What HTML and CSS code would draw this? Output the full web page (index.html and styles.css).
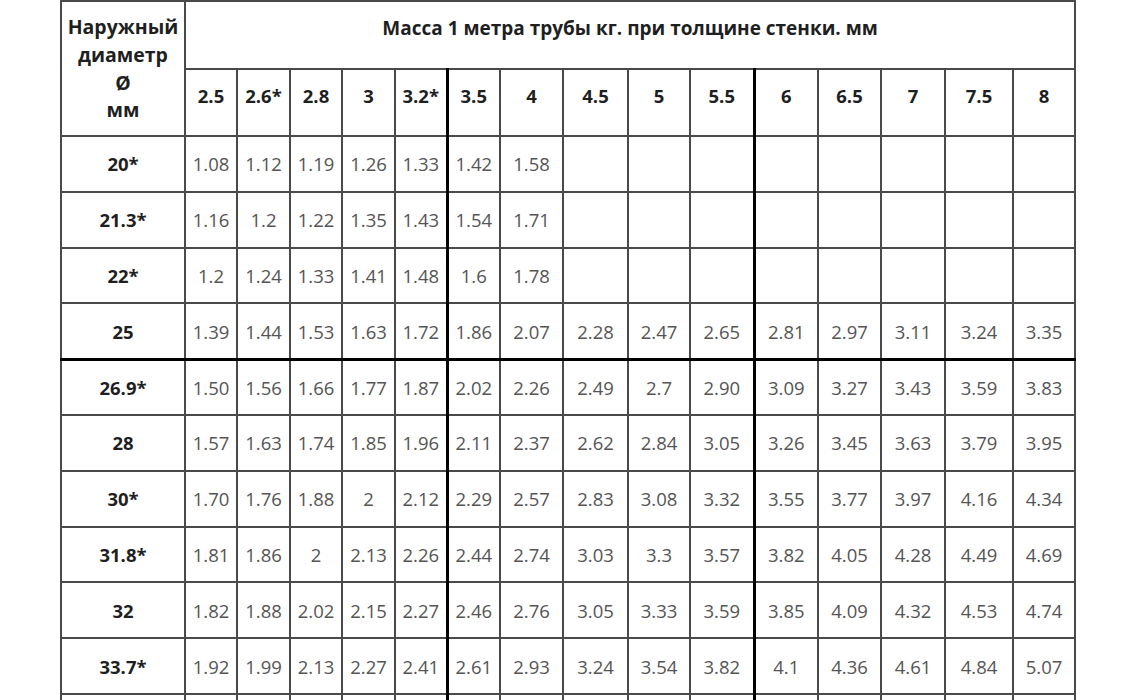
FILE: index.html
```html
<!DOCTYPE html>
<html lang="ru">
<head>
<meta charset="utf-8">
<link rel="stylesheet" href="styles.css">
</head>
<body>
<table class="grid">
<colgroup>
<col class="c-d"><col class="c52"><col class="c53"><col class="c52"><col class="c53"><col class="c52"><col class="c53"><col class="c63"><col class="c65"><col class="c62"><col class="c64"><col class="c64"><col class="c63"><col class="c64"><col class="c68"><col class="c62">
</colgroup>
<thead>
<tr class="h1">
<th rowspan="2" class="dia">Наружный<br>диаметр<br>Ø<br>мм</th>
<th colspan="15" class="title">Масса 1 метра трубы кг. при толщине стенки. мм</th>
</tr>
<tr class="h2">
<th>2.5</th><th>2.6*</th><th>2.8</th><th>3</th><th>3.2*</th><th>3.5</th><th>4</th><th>4.5</th><th>5</th><th>5.5</th><th>6</th><th>6.5</th><th>7</th><th>7.5</th><th>8</th>
</tr>
</thead>
<tbody>
<tr><th>20*</th><td>1.08</td><td>1.12</td><td>1.19</td><td>1.26</td><td>1.33</td><td>1.42</td><td>1.58</td><td></td><td></td><td></td><td></td><td></td><td></td><td></td><td></td></tr>
<tr><th>21.3*</th><td>1.16</td><td>1.2</td><td>1.22</td><td>1.35</td><td>1.43</td><td>1.54</td><td>1.71</td><td></td><td></td><td></td><td></td><td></td><td></td><td></td><td></td></tr>
<tr><th>22*</th><td>1.2</td><td>1.24</td><td>1.33</td><td>1.41</td><td>1.48</td><td>1.6</td><td>1.78</td><td></td><td></td><td></td><td></td><td></td><td></td><td></td><td></td></tr>
<tr><th>25</th><td>1.39</td><td>1.44</td><td>1.53</td><td>1.63</td><td>1.72</td><td>1.86</td><td>2.07</td><td>2.28</td><td>2.47</td><td>2.65</td><td>2.81</td><td>2.97</td><td>3.11</td><td>3.24</td><td>3.35</td></tr>
<tr class="sep"><th>26.9*</th><td>1.50</td><td>1.56</td><td>1.66</td><td>1.77</td><td>1.87</td><td>2.02</td><td>2.26</td><td>2.49</td><td>2.7</td><td>2.90</td><td>3.09</td><td>3.27</td><td>3.43</td><td>3.59</td><td>3.83</td></tr>
<tr><th>28</th><td>1.57</td><td>1.63</td><td>1.74</td><td>1.85</td><td>1.96</td><td>2.11</td><td>2.37</td><td>2.62</td><td>2.84</td><td>3.05</td><td>3.26</td><td>3.45</td><td>3.63</td><td>3.79</td><td>3.95</td></tr>
<tr><th>30*</th><td>1.70</td><td>1.76</td><td>1.88</td><td>2</td><td>2.12</td><td>2.29</td><td>2.57</td><td>2.83</td><td>3.08</td><td>3.32</td><td>3.55</td><td>3.77</td><td>3.97</td><td>4.16</td><td>4.34</td></tr>
<tr><th>31.8*</th><td>1.81</td><td>1.86</td><td>2</td><td>2.13</td><td>2.26</td><td>2.44</td><td>2.74</td><td>3.03</td><td>3.3</td><td>3.57</td><td>3.82</td><td>4.05</td><td>4.28</td><td>4.49</td><td>4.69</td></tr>
<tr><th>32</th><td>1.82</td><td>1.88</td><td>2.02</td><td>2.15</td><td>2.27</td><td>2.46</td><td>2.76</td><td>3.05</td><td>3.33</td><td>3.59</td><td>3.85</td><td>4.09</td><td>4.32</td><td>4.53</td><td>4.74</td></tr>
<tr><th>33.7*</th><td>1.92</td><td>1.99</td><td>2.13</td><td>2.27</td><td>2.41</td><td>2.61</td><td>2.93</td><td>3.24</td><td>3.54</td><td>3.82</td><td>4.1</td><td>4.36</td><td>4.61</td><td>4.84</td><td>5.07</td></tr>
<tr class="tail"><th></th><td></td><td></td><td></td><td></td><td></td><td></td><td></td><td></td><td></td><td></td><td></td><td></td><td></td><td></td><td></td></tr>
</tbody>
</table>
</body>
</html>
```

FILE: styles.css
```css
html, body {
  margin: 0;
  padding: 0;
  background: #ffffff;
}

body {
  padding-left: 60px;
  font-family: "Open Sans", "Noto Sans", "DejaVu Sans", sans-serif;
  overflow: hidden;
}

.grid {
  border-collapse: collapse;
  table-layout: fixed;
  width: 1016px;
  font-size: 18.5px;
}

.c-d { width: 124px; }
.c52 { width: 52px; }
.c53 { width: 53px; }
.c62 { width: 62px; }
.c63 { width: 63px; }
.c64 { width: 64px; }
.c65 { width: 65px; }
.c68 { width: 68px; }

.grid th,
.grid td {
  border: 2px solid #4a4a4a;
  padding: 0;
  text-align: center;
  vertical-align: middle;
  white-space: nowrap;
}

.grid th {
  font-weight: 700;
  color: #1f1f1f;
}

.grid td {
  font-weight: 400;
  color: #555555;
}

.grid .h1 { height: 68px; }
.grid .h2 { height: 67px; }
.grid tbody tr { height: 55.8px; }

.grid .dia {
  font-size: 19.5px;
  line-height: 27.7px;
}

.grid .title {
  font-size: 19px;
  vertical-align: top;
  padding-top: 13px;
}

.grid .h2 th {
  vertical-align: top;
  padding-top: 13px;
}

/* thick vertical separators: before 3.5 and before 6 */
.grid .h2 th:nth-child(6),
.grid .h2 th:nth-child(11),
.grid tbody td:nth-child(7),
.grid tbody td:nth-child(12) {
  border-left: 3px solid #000000;
}

/* thick horizontal separator above 26.9* */
.grid .sep th,
.grid .sep td {
  border-top: 3px solid #000000;
}
```
